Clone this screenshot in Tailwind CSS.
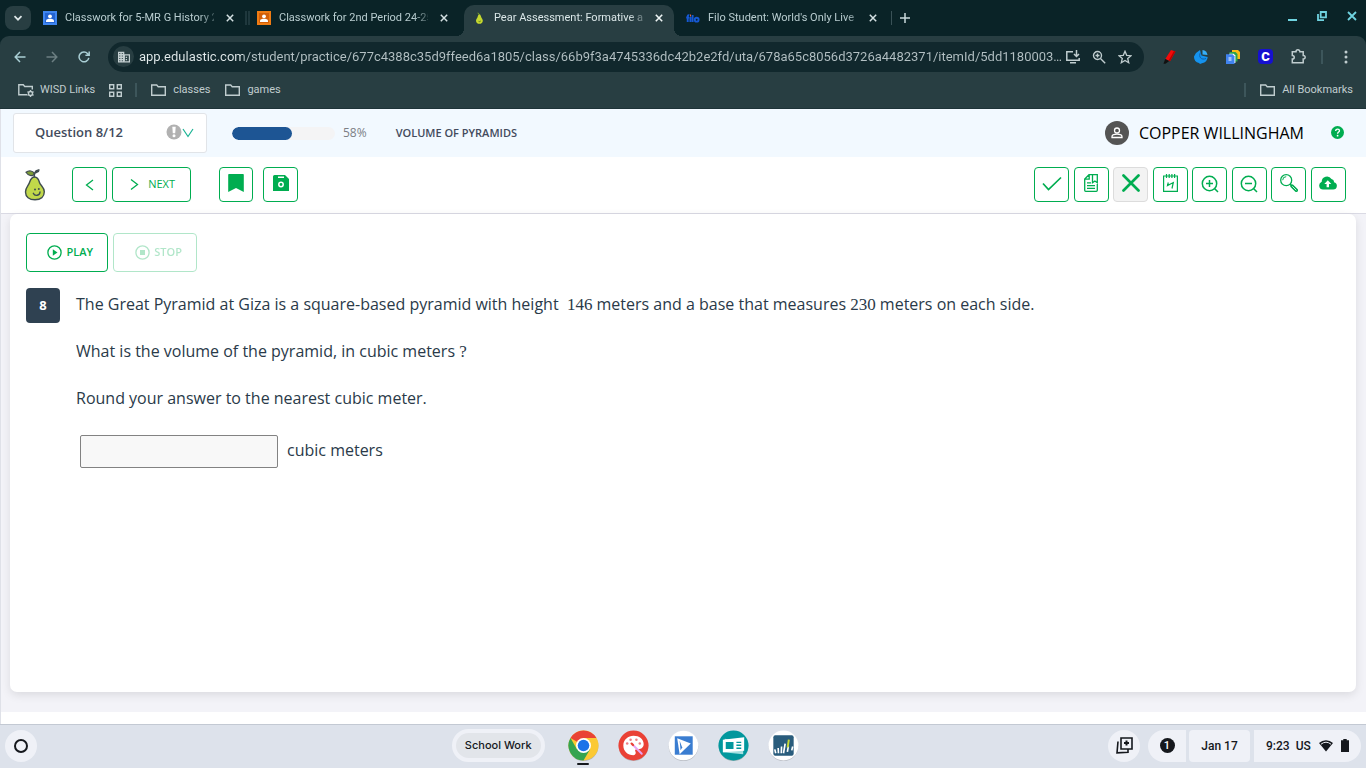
<!DOCTYPE html>
<html lang="en">
<head>
<meta charset="utf-8">
<title>Pear Assessment: Formative and summative assessments</title>
<script src="https://cdn.jsdelivr.net/npm/@tailwindcss/browser@4"></script>
</head>
<body class="h-screen flex flex-col overflow-hidden bg-white font-['Open_Sans',sans-serif] text-[#2a3a49]">

<!-- Browser frame -->
<div class="shrink-0 bg-[#0a2327] font-[Roboto,sans-serif] text-[11px]">
  <div class="flex h-9 items-stretch">
    <div class="flex w-9 items-center pl-[5px]">
      <button aria-label="Search tabs" class="grid h-6 w-[26px] place-items-center rounded-lg bg-[#283e42] text-[#dfe8e9]">
        <svg class="size-3" viewBox="0 0 12 12" fill="none" stroke="currentColor" stroke-width="1.7"><path d="M2.5 4.2 6 7.7l3.500-3.500"/></svg>
      </button>
    </div>
    <div role="tablist" class="flex text-[#b9cdd0]">
      <div role="tab" class="flex w-[214px] items-center pl-[7px]">
        <svg class="size-[14px] shrink-0" viewBox="0 0 14 14"><path fill="#3f86f0" d="M0 0h14v14H0z"/><path fill="#2464d2" d="M2 2h10v10H2z"/><circle cx="7" cy="5.300" r="1.900" fill="#fff"/><path fill="#fff" d="M3 11V9.700C3 8.200 5.300 7.700 7 7.700s4 .5 4 2V11z"/></svg>
        <span class="ml-2 w-[149px] shrink-0 whitespace-nowrap [mask-image:linear-gradient(to_right,black_90%,transparent_105%)]">Classwork for 5-MR G History 2</span>
        <button aria-label="Close tab" class="ml-2 grid size-4 place-items-center text-[#d5e1e3]"><svg class="size-2" viewBox="0 0 8 8" fill="none" stroke="currentColor" stroke-width="1.500"><path d="m.8.8 6.400 6.400m0-6.400L.8 7.200"/></svg></button>
        <span class="ml-[7px] h-[14px] w-[5px] border-x-2 border-[#1f383d]"></span>
      </div>
      <div role="tab" class="flex w-[214px] items-center pl-[7px]">
        <svg class="size-[14px] shrink-0" viewBox="0 0 14 14"><path fill="#f07c13" d="M0 0h14v14H0z"/><path fill="#d35f08" d="M2 2h10v10H2z"/><circle cx="7" cy="5.300" r="1.900" fill="#fff"/><path fill="#fff" d="M3 11V9.700C3 8.200 5.300 7.700 7 7.700s4 .5 4 2V11z"/></svg>
        <span class="ml-2 w-[149px] shrink-0 whitespace-nowrap [mask-image:linear-gradient(to_right,black_90%,transparent_105%)]">Classwork for 2nd Period 24-25</span>
        <button aria-label="Close tab" class="ml-2 grid size-4 place-items-center text-[#d5e1e3]"><svg class="size-2" viewBox="0 0 8 8" fill="none" stroke="currentColor" stroke-width="1.500"><path d="m.8.8 6.400 6.400m0-6.400L.8 7.200"/></svg></button>
      </div>
      <div role="tab" aria-selected="true" class="relative mt-[5px] mr-[4px] flex w-[210px] items-center rounded-t-[10px] bg-[#283e42] pb-[5px] pl-2 text-[#dbe7e8]">
        <span class="absolute bottom-0 -left-2 size-2 bg-[radial-gradient(circle_at_0_0,#0a2327_8px,#283e42_8px)]"></span>
        <span class="absolute -right-2 bottom-0 size-2 bg-[radial-gradient(circle_at_100%_0,#0a2327_8px,#283e42_8px)]"></span>
        <svg class="size-[14px] shrink-0" viewBox="0 0 14 14"><path fill="#c5d82f" d="M7.300 3.300c1.300 0 1.500 2.200 2.200 3.400.7 1.200 1.300 1.900 1.300 3 0 1.900-1.500 3.100-3.400 3.100S4 11.600 4 9.700c0-1.200.6-1.900 1.300-3 .7-1.200.8-3.400 2-3.400z"/><path fill="#6f9b2a" d="M7 3.200C6 3 5.500 2.300 5.500 1.400 6.500 1.500 7.100 2 7.300 3z"/><path d="M6.500 10.300q1.500 1 2.400-.5" fill="none" stroke="#57731a" stroke-width=".8"/></svg>
        <span class="ml-2 w-[149px] shrink-0 whitespace-nowrap [mask-image:linear-gradient(to_right,black_90%,transparent_105%)]">Pear Assessment: Formative an</span>
        <button aria-label="Close tab" class="ml-2 grid size-4 place-items-center text-[#eef5f5]"><svg class="size-2" viewBox="0 0 8 8" fill="none" stroke="currentColor" stroke-width="1.600"><path d="m.8.8 6.400 6.400m0-6.400L.8 7.200"/></svg></button>
      </div>
      <div role="tab" class="flex w-[214px] items-center pl-2">
        <svg class="size-[14px] shrink-0" viewBox="0 0 14 14" fill="none" stroke="#1659d4" stroke-width="1.900"><path d="M3.300 4.200C2 3.800 1.700 4.500 1.700 6v5M.2 6.500h2.900M4.400 6v5M6.600 4v7"/><circle cx="10.700" cy="8.700" r="1.900"/><path stroke="#e2673c" d="M4 4.500h1"/></svg>
        <span class="ml-2 w-[149px] shrink-0 whitespace-nowrap [mask-image:linear-gradient(to_right,black_92%,transparent_108%)]">Filo Student: World's Only Live I</span>
        <button aria-label="Close tab" class="ml-2 grid size-4 place-items-center text-[#d5e1e3]"><svg class="size-2" viewBox="0 0 8 8" fill="none" stroke="currentColor" stroke-width="1.500"><path d="m.8.8 6.400 6.400m0-6.400L.8 7.200"/></svg></button>
        <span class="ml-[10px] h-[14px] w-px bg-[#3a5257]"></span>
      </div>
      <button aria-label="New tab" class="ml-[5px] grid w-4 place-items-center text-[#c9d9db]"><svg class="size-[10px]" viewBox="0 0 10 10" stroke="currentColor" stroke-width="1.500"><path d="M5 0v10M0 5h10"/></svg></button>
    </div>
    <div class="ml-auto flex items-center gap-[20px] pr-[9px] pb-[5px] text-[#6fd3e0]">
      <button aria-label="Minimize"><svg class="block size-[10px]" viewBox="0 0 10 10" stroke="currentColor" stroke-width="2"><path d="M1 9h9"/></svg></button>
      <button aria-label="Restore"><svg class="block size-[10px]" viewBox="0 0 10 10" fill="none" stroke="currentColor" stroke-width="1.800"><path d="M3.700 1h5.300v5.300H3.700zM1 3v6.200h6"/></svg></button>
      <button aria-label="Close window"><svg class="block size-[10px]" viewBox="0 0 10 10" stroke="currentColor" stroke-width="1.800"><path d="m1 1 8 8m0-8L1 9"/></svg></button>
    </div>
  </div>

  <div class="rounded-t-[9px] border-b border-[#1e3338] bg-[#283e42] text-[#c0cdcf]">
    <div class="flex h-[41px] items-center pr-[13px] pl-[14px]">
      <button aria-label="Back" class="text-[#a9ced4]"><svg class="block size-3" viewBox="0 0 12 12" fill="none" stroke="currentColor" stroke-width="1.500"><path d="M11.500 6H1.300M6 1 1.200 6 6 11"/></svg></button>
      <button aria-label="Forward" class="ml-5 text-[#6c7f82]"><svg class="block size-3" viewBox="0 0 12 12" fill="none" stroke="currentColor" stroke-width="1.500"><path d="M.5 6h10.200M6 1l4.800 5L6 11"/></svg></button>
      <button aria-label="Reload" class="ml-5 text-[#a9ced4]"><svg class="block size-3" viewBox="0 0 12 12" fill="none" stroke="currentColor" stroke-width="1.500"><path d="M10.800 6.800A4.900 4.900 0 1 1 9.700 2.700l1.200 1.200M11.200.5v3.800H7.400"/></svg></button>
      <div class="ml-[18px] flex h-[30px] min-w-0 flex-1 items-center rounded-full bg-[#11282d] pr-3 pl-[5px]">
        <span class="grid size-[21px] shrink-0 place-items-center rounded-full bg-[#283e42]">
          <svg class="size-3" viewBox="0 0 12 12"><path fill="#c3cfd1" d="M0 .8h6.300v2.400H12V11.500H0z"/><path fill="#283e42" d="M1.300 2.100h1v1h-1zm2.500 0h1v1h-1zM1.300 4.500h1v1h-1zm2.500 0h1v1h-1zM1.300 6.900h1v1h-1zm2.500 0h1v1h-1zM1.300 9.300h1v1h-1zm2.500 0h1v1h-1zM6.300 4.500h4.500v5.800H6.300z"/><path fill="#c3cfd1" d="M7.700 5.700h1.400v1.200H7.700zm0 2.300h1.400v1.200H7.700zM6 4h.9v6.500H6z"/></svg>
        </span>
        <input aria-label="Address" class="ml-[5px] min-w-0 flex-1 bg-[linear-gradient(90deg,#e4eced_104px,#b4c1c4_104px)] bg-clip-text text-[13px] text-transparent outline-none" value="app.edulastic.com/student/practice/677c4388c35d9ffeed6a1805/class/66b9f3a4745336dc42b2e2fd/uta/678a65c8056d3726a4482371/itemId/5dd1180003…">
        <div class="flex shrink-0 items-center gap-3">
          <button aria-label="Install app"><svg class="block size-[14px]" viewBox="0 0 14 14" fill="none" stroke="currentColor" stroke-width="1.500"><path d="M7 1.700H.8v8.500h12.400V8M4 12.700h6M10.500 0v6M8 4l2.500 2.500L13 4"/></svg></button>
          <button aria-label="Zoom"><svg class="block size-[14px]" viewBox="0 0 14 14" fill="none" stroke="currentColor" stroke-width="1.400"><circle cx="5.500" cy="5.500" r="4"/><path d="m8.500 8.500 4.700 4.700M3.500 5.500h4M5.500 3.500v4"/></svg></button>
          <button aria-label="Bookmark this tab"><svg class="block size-[14px]" viewBox="0 0 14 14" fill="none" stroke="currentColor" stroke-width="1.300"><path d="m7 1.300 1.700 4 4.300.4-3.300 2.800 1 4.200L7 10.500l-3.700 2.200 1-4.200L1 5.700l4.300-.4z"/></svg></button>
        </div>
      </div>
      <div class="ml-[18px] flex shrink-0 items-center gap-[18px]">
        <button aria-label="Highlighter"><svg class="block size-[14px]" viewBox="0 0 14 14"><path fill="#f20a0a" d="M9 0l4.500 1.500L8 11.300 3.300 9z"/><path fill="#b80000" d="m12 1 1.500.5L8 11.300l-1.300-.7z"/><path fill="#111" d="M3.200 9 7.200 11l-3.700 2.700H1.500z"/></svg></button>
        <button aria-label="Night mode"><svg class="block size-[14px]" viewBox="0 0 14 14"><path fill="#1593ee" d="M6 0 7.500 5.500 13.700 7A7 7 0 0 1 8 13.300L6 14l-1-1A6.500 6.500 0 0 1 0 6.500L2 3z"/><path d="M6.500 2.500C4 7 7.500 10.500 12 8.500" fill="none" stroke="#0a5fae"/><path fill="#35aef8" d="M8.500 0A6 6 0 0 1 13.500 5L8.500 4.500z"/></svg></button>
        <button aria-label="Documents"><svg class="block size-[14px]" viewBox="0 0 14 14"><path fill="#f9bb15" d="M6 0h6l2 2v7H6z"/><path fill="#2ba24c" d="M3.500 2h6l2 2v7.500h-8z"/><path fill="#fff" d="M3.200 3.800h4.500L9.400 5.500V13H3.200z"/><path fill="#4083ef" d="M0 4.300h6.500l2 2V14H0z"/><path d="M2.500 8h3M2.500 10h3" stroke="#fff"/></svg></button>
        <button aria-label="Clever" class="grid size-[15px] place-items-center rounded bg-[#1610d0] text-[13px] leading-none font-black text-white">C</button>
        <button aria-label="Extensions"><svg class="block size-[15px]" viewBox="0 0 15 15" fill="none" stroke="currentColor" stroke-width="1.500"><path d="M1.300 2.800h3.700C5 .2 9 .2 8.900 2.800h3.300v3.600c2.600-.1 2.600 3.700 0 3.600v3.800H1.300v-3.700c2.600 0 2.600-3.700 0-3.700z"/></svg></button>
      </div>
      <span class="ml-[15px] h-[14px] w-[2px] bg-[#3d565b]"></span>
      <button aria-label="Menu" class="ml-[16px]"><svg class="block h-4 w-[14px]" viewBox="0 0 14 16" fill="currentColor"><circle cx="7" cy="3" r="1.500"/><circle cx="7" cy="8" r="1.500"/><circle cx="7" cy="13" r="1.500"/></svg></button>
    </div>
    <nav aria-label="Bookmarks" class="flex h-[31px] items-center pr-[13px] pb-[5px] pl-[18px]">
      <a href="#" class="flex items-center gap-[6px]"><svg class="h-[14px] w-4" viewBox="0 0 16 14" fill="none" stroke="currentColor" stroke-width="1.400"><path d="M9 11.700H.8V1.800h4.500l1.400 1.700h7.600v3"/><circle cx="12.500" cy="10.500" r="2"/><path d="M12.500 7v1.500m0 4V14m-3-5.300 1.200.8m3.600 2 1.200.8m0-3.600-1.200.8m-3.600 2-1.200.8"/></svg>WISD Links</a>
      <a href="#" aria-label="Apps" class="ml-[14px]"><svg class="size-[13px]" viewBox="0 0 13 13" fill="none" stroke="currentColor" stroke-width="1.400"><path d="M.7.700h4v4h-4zM8.300.7h4v4h-4zM.7 8.300h4v4h-4zM8.300 8.300h4v4h-4z"/></svg></a>
      <span class="ml-[13px] h-[14px] w-[2px] bg-[#3d565b]"></span>
      <a href="#" class="ml-[14px] flex items-center gap-[7px]"><svg class="h-[14px] w-[15px]" viewBox="0 0 15 14" fill="none" stroke="currentColor" stroke-width="1.400"><path d="M.7 2h5l1.500 1.700h7.100v8.600H.7z"/></svg>classes</a>
      <a href="#" class="ml-[15px] flex items-center gap-[7px]"><svg class="h-[14px] w-[15px]" viewBox="0 0 15 14" fill="none" stroke="currentColor" stroke-width="1.400"><path d="M.7 2h5l1.500 1.700h7.100v8.600H.7z"/></svg>games</a>
      <span class="ml-auto h-[14px] w-[2px] bg-[#3d565b]"></span>
      <a href="#" class="ml-[14px] flex items-center gap-[7px]"><svg class="h-[14px] w-[15px]" viewBox="0 0 15 14" fill="none" stroke="currentColor" stroke-width="1.400"><path d="M.7 2h5l1.500 1.700h7.100v8.600H.7z"/></svg>All Bookmarks</a>
    </nav>
  </div>
</div>

<!-- Assessment page -->
<div class="flex min-h-0 flex-1 flex-col border-l border-[#dfe1e8]">
  <header class="flex h-12 shrink-0 items-center bg-[#f2f9ff] pr-[22px] pl-3">
    <button class="flex h-10 w-[194px] items-center rounded-[3px] border border-[#e1e4e8] bg-white pr-[12px] pl-[21px] text-[13px] font-semibold text-[#434b5d]">
      Question 8/12
      <svg class="mb-[2px] ml-auto size-4" viewBox="0 0 16 16"><circle cx="8" cy="8" r="7.500" fill="#b1b1b1"/><path fill="#fff" d="M6.300 2.700h3.400L9.200 9.300H6.800z"/><circle cx="8" cy="11.700" r="1.500" fill="#fff"/></svg>
      <svg class="h-3 w-3" viewBox="0 0 12 12" fill="none" stroke="#1ab394" stroke-width="1.200"><path d="m1 2 5 7.500L11 2"/></svg>
    </button>
    <div role="progressbar" aria-valuenow="58" aria-label="Progress" class="ml-[25px] h-[13px] w-[103px] overflow-hidden rounded-full bg-[#f4f4f5]"><div class="h-full rounded-full bg-[#1d5594]" style="width:58%"></div></div>
    <span class="ml-2 text-xs text-[#7c7f85]">58%</span>
    <span class="ml-[29px] text-[11px] font-semibold text-[#434b5d]">VOLUME OF PYRAMIDS</span>
    <div class="ml-auto flex items-center gap-[10px] text-base font-medium text-black">
      <svg class="size-6" viewBox="0 0 24 24"><circle cx="12" cy="12" r="12" fill="#545454"/><g fill="none" stroke="#fff" stroke-width="1.300"><circle cx="12" cy="9.500" r="2.500"/><path d="M7 16.500v-.8c0-1.700 2.700-2.500 5-2.500s5 .8 5 2.500v.8z"/></g></svg>
      COPPER WILLINGHAM
    </div>
    <button aria-label="Help" class="ml-[27px] pb-[2px]"><svg class="block size-[13px]" viewBox="0 0 13 13"><circle cx="6.500" cy="6.500" r="6.500" fill="#00ad50"/><path d="M4.700 5c0-2.600 3.800-2.400 3.800-.2 0 1.300-1.900 1.300-1.900 2.900" fill="none" stroke="#fff" stroke-width="1.300"/><circle cx="6.600" cy="9.700" r=".9" fill="#fff"/></svg></button>
  </header>

  <div class="flex h-[57px] shrink-0 items-center border-b border-[#dadae4] bg-white pr-5 pb-px pl-[23px] text-[#00ad50]">
    <svg class="h-8 w-[22px]" viewBox="0 0 22 32"><path fill="#c1d84a" stroke="#3f4c4f" stroke-width="1.400" d="M10.500 8c3.200 0 4.200 2.400 5 5.500.7 2.700 4.800 4.800 4.800 9.300 0 4.800-3.500 8-9.300 8s-9.500-3-9.500-7.800c0-4.500 3-6.500 4-9.500C6.500 10.500 7.500 8 10.500 8z"/><path fill="#7d9c36" stroke="#3f4c4f" stroke-width="1.200" d="M10.500 5C8.500 8 4 6.500 2 3.300 5 1 9 1.500 10.500 5z"/><path d="M10.500 8c-.5-2.500 0-4.500 1.500-6l3.500-1.300M11 4.200l4-2" stroke="#3f4c4f" stroke-width="1.500" fill="none"/><path d="M9.300 24.300c1.500 3.300 6.500 2.500 6.700-1.300" stroke="#3f4c4f" stroke-width="1.400" fill="none" stroke-linecap="round"/><circle cx="11" cy="20.500" r="1" fill="#3f4c4f"/><circle cx="14.800" cy="20" r="1" fill="#3f4c4f"/></svg>
    <button aria-label="Previous" class="ml-[26px] grid size-[35px] place-items-center rounded border border-current"><svg class="size-4" viewBox="0 0 16 16" fill="none" stroke="currentColor" stroke-width="1.300"><path d="M11 3 4.500 8l6.500 5"/></svg></button>
    <button class="ml-[5px] flex h-[35px] w-[79px] items-center rounded border border-current pr-[15px] pl-[13px] text-[11px]"><svg class="mr-auto size-4" viewBox="0 0 16 16" fill="none" stroke="currentColor" stroke-width="1.300"><path d="m5 2.500 6.500 5L5 12.500"/></svg>NEXT</button>
    <button aria-label="Bookmark" class="ml-[28px] grid h-[35px] w-[34px] place-items-center rounded border border-current pb-1"><svg class="h-[18px] w-4" viewBox="0 0 16 18" fill="currentColor"><path d="M1 0h14a.8.8 0 0 1 .8.8V18L8 14 .2 18V.8A.8.8 0 0 1 1 0z"/></svg></button>
    <button aria-label="Save" class="ml-[10px] grid size-[35px] place-items-center rounded border border-current pb-[3px]"><svg class="size-4" viewBox="0 0 16 16"><path fill="currentColor" d="M0 1.500A1.500 1.500 0 0 1 1.500 0H12l4 4v12H0z"/><path fill="#fff" d="M5 1.500h6V3H5z"/><circle cx="8" cy="9.500" r="2.200" fill="none" stroke="#fff" stroke-width="1.500"/></svg></button>
    <div class="ml-auto flex w-[312px] justify-between">
      <button aria-label="Check answer" class="grid size-[35px] place-items-center rounded border border-current pb-[2px]"><svg class="size-5" viewBox="0 0 20 20" fill="none" stroke="currentColor" stroke-width="1.700"><path d="m1 9.500 5.500 6L19 3.500"/></svg></button>
      <button aria-label="Reference sheet" class="grid size-[35px] place-items-center rounded border border-current pb-[3px]"><svg class="h-[18px] w-[14px]" viewBox="0 0 14 18" fill="none" stroke="currentColor" stroke-width="1.300"><path d="M13.300 10v6.300a1 1 0 0 1-1 1H1.700a1 1 0 0 1-1-1V5L5 .7h3M5.200 1v4.200H.9M8.500.7h4.800v8L10.900 7 8.500 8.700zM3 8.800h4M3 11.600h8M3 14.300h8"/></svg></button>
      <button aria-label="Cross out" class="grid size-[35px] place-items-center rounded border border-[#dcdcdc] bg-[#f3f3f3] pb-[3px]"><svg class="size-[18px]" viewBox="0 0 18 18" stroke="currentColor" stroke-width="2.700" stroke-linecap="round"><path d="m1.500 1.500 15 15m0-15-15 15"/></svg></button>
      <button aria-label="Scratchpad" class="grid size-[35px] place-items-center rounded border border-current pb-[3px]"><svg class="h-[18px] w-[15px]" viewBox="0 0 15 18" fill="none" stroke="currentColor" stroke-width="1.200"><path d="M.6 2h13.800v15.300H.6zM3.500 0v4M6.200 0v4M8.900 0v4M11.600 0v4M5.300 8.500 4.500 11.500 10.300 8.500 9 14.500"/></svg></button>
      <button aria-label="Zoom in" class="grid size-[35px] place-items-center rounded border border-current pb-[2px]"><svg class="size-[18px]" viewBox="0 0 18 18" fill="none" stroke="currentColor" stroke-width="1.500"><circle cx="8.500" cy="8.500" r="7.200"/><path d="m13.500 13.500 3.500 3.500M5 8.500h7M8.500 5v7"/></svg></button>
      <button aria-label="Zoom out" class="grid size-[35px] place-items-center rounded border border-current pb-[2px]"><svg class="size-[18px]" viewBox="0 0 18 18" fill="none" stroke="currentColor" stroke-width="1.500"><circle cx="8.500" cy="8.500" r="7.200"/><path d="m13.500 13.500 3.500 3.500M5 8.500h7"/></svg></button>
      <button aria-label="Magnify" class="grid size-[35px] place-items-center rounded border border-current pb-[3px]"><svg class="size-[18px]" viewBox="0 0 18 18" fill="none" stroke="currentColor" stroke-width="1.300"><circle cx="6.200" cy="6.200" r="5.500"/><path d="M2.700 6.200a3.500 3.500 0 0 1 3.500-3.500" stroke-width="1"/><path d="m10 10 1.500 1.500"/><path stroke-width="3.500" stroke-linecap="round" d="m12 12 4.300 4.300"/><path stroke="#fff" stroke-width=".8" d="m12.300 12.300 4 4"/></svg></button>
      <button aria-label="Upload" class="grid size-[35px] place-items-center rounded border border-current pb-[3px]"><svg class="h-[14px] w-[18px]" viewBox="0 0 18 14"><path fill="currentColor" d="M4 13.500A4 4 0 0 1 2.700 5.800 5.300 5.300 0 0 1 12.500 3 3 3 0 0 1 15 6.200a3.700 3.700 0 0 1-.8 7.300z"/><path fill="#fff" d="M8.800 4.300 12.300 8H10v3.300H7.600V8H5.300z"/></svg></button>
    </div>
  </div>

  <main class="flex min-h-0 flex-1 flex-col bg-[#f3f3f8] pr-[10px] pb-5 pl-[9px]">
    <section class="flex-1 rounded-[7px] bg-white px-4 pt-[19px] shadow-[0_3px_10px_rgba(0,0,0,0.1)]">
      <div class="flex gap-[5px] text-[11px] font-semibold text-[#00ad50]">
        <button class="flex h-[39px] w-[82px] items-center justify-end gap-1 rounded border border-current pr-[14px]"><svg class="size-[15px]" viewBox="0 0 15 15"><circle cx="7.500" cy="7.500" r="6.600" fill="none" stroke="currentColor" stroke-width="1.300"/><path fill="currentColor" d="m5.800 4.300 4.700 3.200-4.700 3.200z"/></svg>PLAY</button>
        <button disabled class="flex h-[39px] w-[84px] items-center justify-end gap-1 rounded border border-current pr-[14px] opacity-30"><svg class="size-[15px]" viewBox="0 0 15 15"><circle cx="7.500" cy="7.500" r="6.600" fill="none" stroke="currentColor" stroke-width="1.300"/><path fill="currentColor" d="M5 5h5v5H5z"/></svg>STOP</button>
      </div>
      <div class="mt-4 flex gap-4">
        <span class="grid h-[35px] w-[34px] shrink-0 place-items-center rounded bg-[#2f4151] text-[13px] font-bold text-white">8</span>
        <div class="pt-1 text-base leading-6">
          <p>The Great Pyramid at Giza is a square-based pyramid with height &nbsp;<span class="font-['Liberation_Serif',serif] text-[17px] leading-none">146</span> meters and a base that measures <span class="font-['Liberation_Serif',serif] text-[17px] leading-none">230</span> meters on each side.</p>
          <p class="mt-[23px]">What is the volume of the pyramid, in cubic meters <span class="font-['Liberation_Serif',serif] text-[17px] leading-none">?</span></p>
          <p class="mt-[23px]">Round your answer to the nearest cubic meter.</p>
          <div class="mt-[25px] flex items-center pl-1">
            <input id="answer" type="text" class="h-[33px] w-[198px] rounded-[2px] border border-[#828282] bg-[#f8f8f8] px-2 outline-none">
            <label for="answer" class="ml-[9px] pb-[3px]">cubic meters</label>
          </div>
        </div>
      </div>
    </section>
  </main>
  <div class="h-3 shrink-0 bg-white"></div>
</div>

<!-- System shelf -->
<footer class="flex h-11 shrink-0 items-center border-t border-[#c3c9d3] bg-[#dde2eb] pr-[5px] pb-[2px] pl-[5px] font-[Roboto,sans-serif] text-xs font-medium text-[#15181d]">
  <button aria-label="Launcher" class="grid size-8 place-items-center rounded-full bg-[#eff1f7]"><span class="size-[14px] rounded-full border-2 border-[#15181d]"></span></button>
  <span class="flex-[413]"></span>
  <button class="h-[33px] w-[93px] rounded-full border-4 border-[#eff1f7] bg-[#e2e5ea] font-[Inter,sans-serif] text-[11px] font-medium">School Work</button>
  <div class="ml-[23px] flex gap-[19px]">
    <button aria-label="Chrome" class="relative">
      <svg class="size-[31px]" viewBox="0 0 32 32"><circle cx="16" cy="16.600" r="15.400" fill="#aab0b8"/><circle cx="16" cy="16" r="15.500" fill="#fbc934"/><path fill="#e94335" d="M16 16 2.600 8.200A15.500 15.500 0 0 1 29.400 8.200H16z"/><path fill="#34a450" d="M2.600 8.200A15.500 15.500 0 0 0 16 31.500l6.800-11.600L16 16l-6.800 3.900z"/><circle cx="16" cy="16" r="7.700" fill="#fff"/><circle cx="16" cy="16" r="6" fill="#1b73e8"/></svg>
      <span class="absolute -bottom-[4px] left-[9px] h-[2px] w-3 rounded-full bg-[#15181d]"></span>
    </button>
    <button aria-label="Canvas"><svg class="size-[31px]" viewBox="0 0 32 32"><circle cx="16" cy="16.700" r="15.300" fill="#b5b9c0"/><circle cx="16" cy="16" r="15.500" fill="#ea4135"/><path fill="#fff" d="M16 6c6 0 10.500 3.500 10.500 8.500 0 3.500-2.500 5.300-5.300 5.300h-2c-1.700 0-1.800 1.500-1.200 2.500.8 1.500.2 3.700-2 3.700-6 0-10.500-4-10.500-10S10.500 6 16 6z"/><g fill="#ee7d83"><circle cx="9.500" cy="14" r="1.300"/><circle cx="13" cy="10" r="1.300"/><circle cx="19" cy="10" r="1.300"/><circle cx="22.500" cy="14" r="1.300"/></g><path stroke="#e6a3f3" stroke-width="2" stroke-linecap="round" d="m15 15 9.500 9.500"/><path stroke="#ea4135" stroke-width="2.300" stroke-linecap="round" d="m14 14 1.500 1.500"/></svg></button>
    <button aria-label="Play app"><svg class="size-[31px]" viewBox="0 0 32 32"><circle cx="16" cy="16.700" r="15.300" fill="#b5b9c0"/><circle cx="16" cy="16" r="15.300" fill="#fff"/><path fill="#3a7dd1" d="M7 6.500h18.500v19H7z"/><path fill="#fff" d="m9.500 8.500 14 5.500-11.500 11z"/><path fill="#3a7dd1" d="m12 11 2.700 7-1.700 3z"/></svg></button>
    <button aria-label="Screencast"><svg class="size-[31px]" viewBox="0 0 32 32"><circle cx="16" cy="16.700" r="15.300" fill="#9fb2b5"/><circle cx="16" cy="16" r="15.500" fill="#02979d"/><path fill="#a5dfe0" d="m7 9 19 3v13L5 23z"/><path fill="#fff" d="m5 10 22-2.500v14L5 23z"/><path fill="#02979d" d="M8 12.500h8v7H8zM19 12h5v1.500h-5zm0 3h5v1.500h-5zm0 3h5v1.500h-5z"/></svg></button>
    <button aria-label="NWEA testing"><svg class="size-[31px]" viewBox="0 0 32 32"><circle cx="16" cy="16.700" r="15.300" fill="#b5b9c0"/><circle cx="16" cy="16" r="15.500" fill="#fff"/><rect x="5.500" y="5.500" width="21" height="21" rx="2" fill="#295c7c"/><path stroke="#fff" stroke-width="1.700" d="m7 20 1 4m2.500-5.500.3 5.500m3.200-7-.3 7m4-10-1.700 10m5-7-1 5.500M25.500 17l-1 4"/><path stroke="#c8d935" stroke-width="2" d="m21.500 10-1.200 8"/></svg></button>
  </div>
  <span class="flex-[308]"></span>
  <button aria-label="Holding space" class="grid size-8 place-items-center rounded-full bg-[#eff1f7]"><svg class="size-[17px]" viewBox="0 0 17 17" fill="none" stroke="currentColor" stroke-width="1.600"><path d="M5 1h11v11H5zM2 4.500 1 15.800l11-.6V12"/><path d="M10.500 3.500v5M8 6h5" stroke-width="2"/></svg></button>
  <div class="ml-2 flex gap-[3px]">
    <button aria-label="1 notification" class="grid h-8 w-[38px] place-items-center rounded-l-full rounded-r bg-[#eff1f7]"><span class="grid size-[15px] place-items-center rounded-full bg-[#15181d] text-[11px] leading-none text-white">1</span></button>
    <button class="h-8 w-[61px] rounded bg-[#eff1f7]">Jan 17</button>
    <button class="ml-px flex h-8 w-[107px] items-center rounded-l rounded-r-full bg-[#eff1f7] pl-3"><span>9:23</span><span class="ml-[6px]">US</span>
      <svg class="ml-2 h-3 w-[14px]" viewBox="0 0 14 12"><path fill="currentColor" d="M0 3a10.500 10.500 0 0 1 14 0L7 11.500z"/><path d="M2 4.200a8 8 0 0 1 10 0" fill="none" stroke="#eff1f7" stroke-width="1"/></svg>
      <svg class="ml-2 h-[13px] w-2" viewBox="0 0 8 13" fill="currentColor"><path d="M2.300 0h3.400v1.300H8V13H0V1.300h2.300z"/></svg>
    </button>
  </div>
</footer>
</body>
</html>
